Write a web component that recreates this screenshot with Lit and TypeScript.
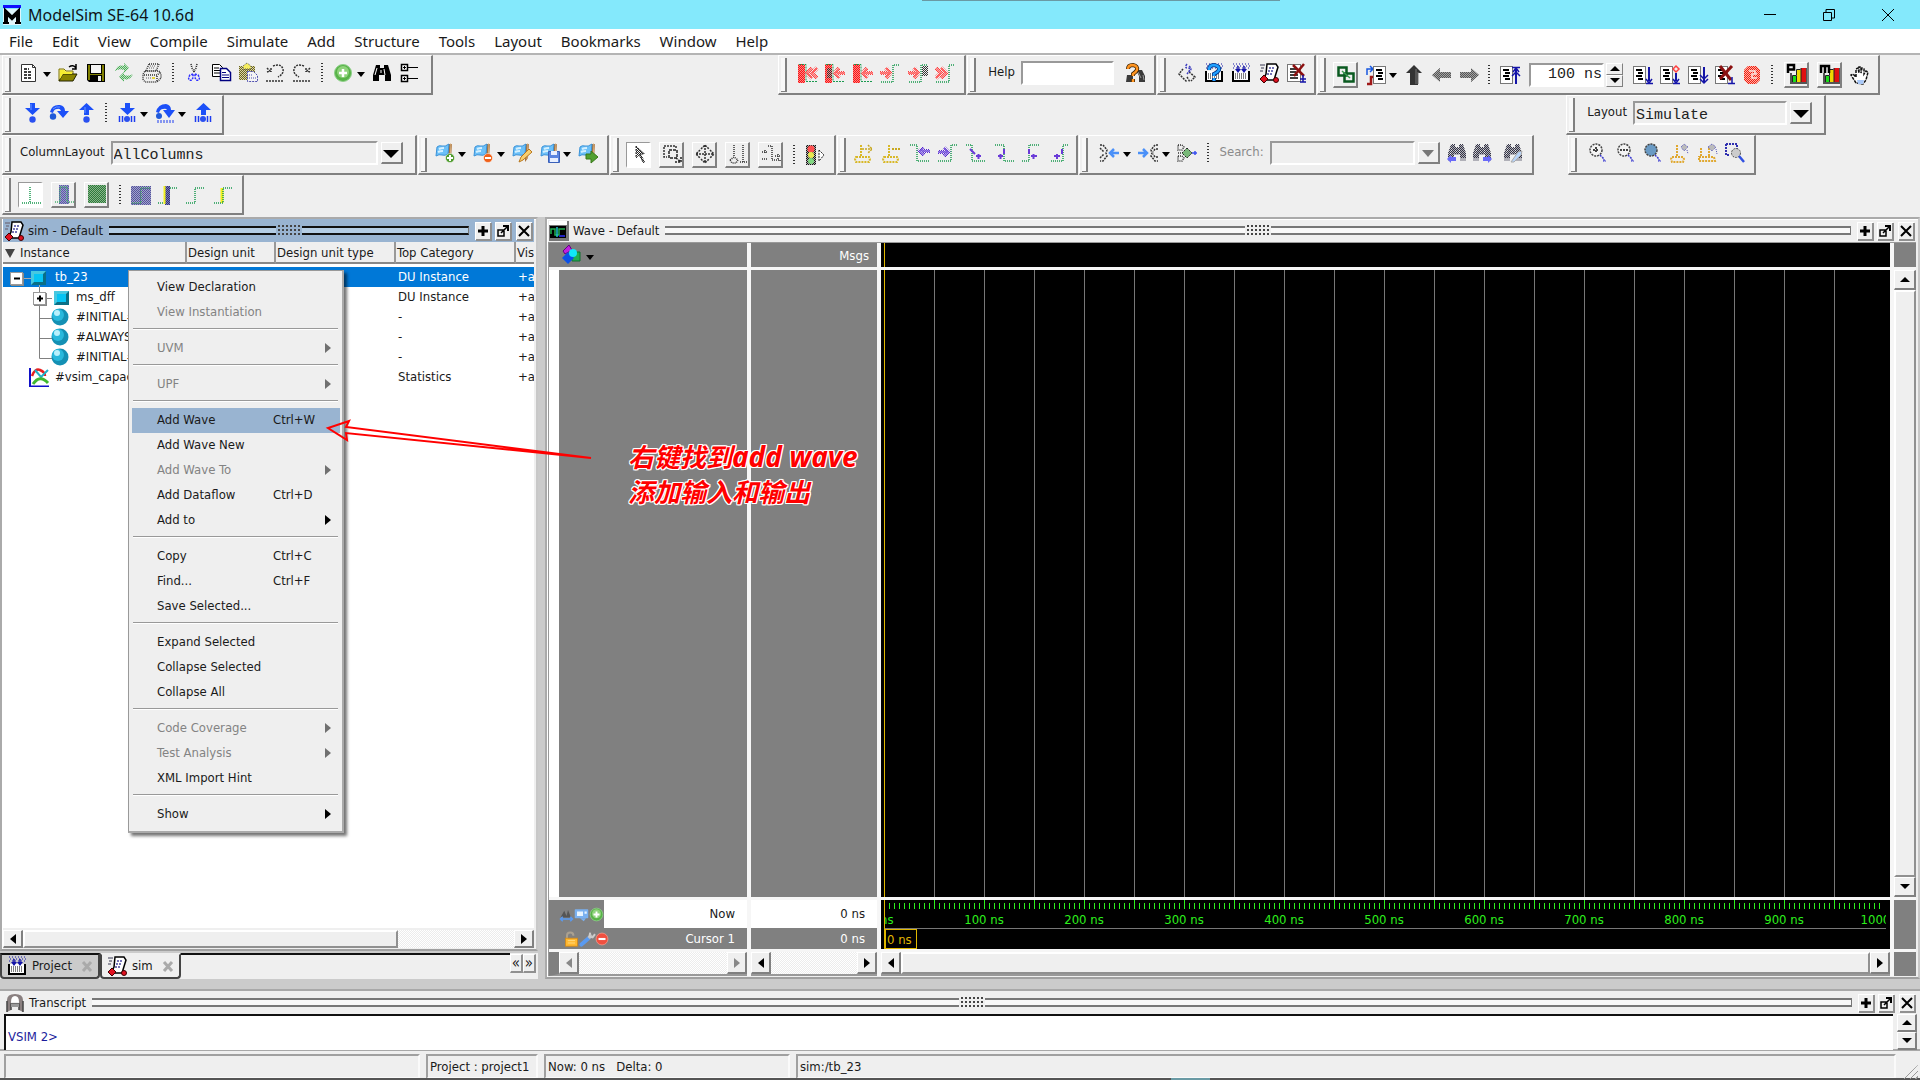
import { LitElement, html, svg, css, nothing, TemplateResult } from "lit";
import { customElement } from "lit/decorators.js";
import { classMap } from "lit/directives/class-map.js";

type Glyph = TemplateResult;

/* ---------- shared glyph parts ---------- */

const sheet = (x: number, y = 1) => svg`
  <rect x="${x}.5" y="${y}.5" width="12" height="17" fill="#fff" stroke="#777"/>
  <path d="M${x + 3} ${y + 4}h6M${x + 5} ${y + 7}h5M${x + 3} ${y + 10}h6M${x + 5} ${y + 13}h5" stroke="#000" stroke-width="2"/>`;

const flag = svg`
  <path d="M13 1h4l-1 14-3 4z" fill="#a8733c"/><path d="M15 1h1l-1 15" fill="none" stroke="#d8b080"/>
  <path d="M2 4q2-2 5-1t7-2l-1 10q-3 2-6 1t-6 1z" fill="#6cc0f8" stroke="#3a92d8"/>
  <path d="M4 6q2-1 5-1M3 9q2-1 5-1" stroke="#d4f0ff" stroke-width="2" fill="none"/>`;

const lens = (inner: Glyph | typeof nothing, fill: string) => svg`
  <circle cx="8" cy="7" r="6" fill="${fill}" stroke="#444" stroke-width="1.500" stroke-dasharray="2 1"/>
  ${inner}
  <path d="M12 12l4 4v2h2" fill="none" stroke="#3a3ad0" stroke-width="1.500" stroke-dasharray="2 1"/>`;

const binoculars = (fill: string) => svg`
  <path d="M4 2h4v3h4V2h4l3 10v6h-6v-6H7v6H1v-6z" fill="${fill}"/>
  <path d="M5 5l-2 7M12 6l1 6M9 7v3" stroke="#fff" fill="none"/>`;

const fadedBinoculars = svg`<g opacity=".45">${binoculars("#667")}</g><path d="M4 1h4v3h4V1h4l3 9v5h-6v-4H7v4H1v-5z" fill="#334" mask="url(#dither)"/>`;

const badge = (cx: number, cy: number, fill: string, plus: boolean) => svg`
  <circle cx="${cx}" cy="${cy}" r="4.500" fill="${fill}" stroke="#fff" stroke-opacity=".5"/>
  <path d="M${cx - 3} ${cy}h6${plus ? `M${cx} ${cy - 3}v6` : ""}" stroke="#fff" stroke-width="2"/>`;

const bars = svg`<path d="M2.500 13v6M5.500 13v6M14.500 13v6M17.500 13v6" stroke="#1c3cf0" stroke-width="1.500"/>`;

const basket = svg`
  <path d="M2 8v10h16V8" fill="#fff" stroke="#000" stroke-width="2"/>
  <path d="M4 11h12M4 13h12M4 15h12" stroke="#000" stroke-dasharray="1 1"/>
  <path d="M2 1h16M3 3h16M2 5h16" stroke="#1414a8" stroke-dasharray="1 2"/>`;

const cursorBase = (color: string, w: number) => svg`
  <path d="M2 14h${w}l1 2-1 3H2l-1-3zM7 2v12" fill="none" stroke="${color}" stroke-width="2" stroke-dasharray="2 1"/>`;

const wave = (d: string, color = "#1b9a50") => svg`<path d="${d}" fill="none" stroke="${color}" stroke-width="1.500" stroke-dasharray="1 1"/>`;

const redArrow = (d: string) => svg`<path d="${d}" fill="none" stroke="#ff4040" stroke-width="4" mask="url(#dither)"/><path d="${d}" fill="none" stroke="#ff6a6a" stroke-width="1.500"/>`;
const violetArrow = (d: string) => svg`<path d="${d}" fill="none" stroke="#5a2ad0" stroke-width="4" mask="url(#dither)"/><path d="${d}" fill="none" stroke="#8060e0" stroke-width="1.500"/>`;

const redBar = svg`<rect x="0" y="1" width="7" height="19" fill="#ff3030" fill-opacity=".55"/><rect x="0" y="1" width="7" height="19" fill="#ff1010" mask="url(#dither)"/><path d="M1 1.500h7V18.500h12" fill="none" stroke="#1b9a50" stroke-dasharray="2 1"/>`;

const chart = svg`<path d="M4 9v10h15V4" fill="none" stroke="#555" stroke-width="2"/>
  <rect x="6" y="12" width="4" height="6" fill="#18e018"/><rect x="10" y="6" width="4" height="12" fill="#f0d800"/><rect x="14" y="4" width="5" height="14" fill="#e01010"/>
  <path d="M5.500 18v-6.500h4V5.500h4M9.500 12v6M14 4v14" fill="none" stroke="#222"/>`;

const ICONS: Record<string, Glyph> = {
  app: svg`<rect x="1" y="0" width="18" height="3" fill="#1010ff"/><path d="M1 4h18v16H1z" fill="#dff6fb"/>
    <path d="M4 18V7l6 6 6-6v11" fill="none" stroke="#000" stroke-width="4"/><path d="M1 18h6M13 18h6" stroke="#000" stroke-width="2"/>`,
  newfile: svg`<path d="M2.500 1.500h11l3 3v14H2.500z" fill="#fff" stroke="#333"/><path d="M13.500 1.500v3h3" fill="none" stroke="#333"/>
    <path d="M5 6h5M5 9h8M5 12h7M5 15h8" stroke="#000" stroke-width="1.500" stroke-dasharray="3 1"/>`,
  open: svg`<path d="M1 18V6h5l2 2h7v3" fill="#fff29a" stroke="#7a7200"/><path d="M1 18l4-7h14l-4 7z" fill="#8a8400" stroke="#222200"/>
    <path d="M2 7h4l2 2h6v2H5l-3 5z" fill="#f6ee30"/><path d="M11 4q4-3 7 1M18 1v5h-4" fill="none" stroke="#000" stroke-width="1.500"/>`,
  save: svg`<path d="M1 1h18v18H3l-2-2z" fill="#000"/><rect x="2" y="2" width="2" height="15" fill="#808000"/><rect x="16" y="2" width="2" height="16" fill="#808000"/>
    <rect x="5" y="2" width="10" height="8" fill="#f4f4f4"/><rect x="4" y="11" width="12" height="1" fill="#808000"/><rect x="12" y="13" width="3" height="5" fill="#eee"/>`,
  refresh: svg`<g opacity=".45"><path d="M1 8q3-7 9-5V0l5 5-5 5V7q-5-2-9 1zM19 11q-3 7-9 5v3l-5-5 5-5v3q5 2 9-1z" fill="#8fd08f"/></g>
    <path d="M1 8q3-7 9-5V0l5 5-5 5V7q-5-2-9 1zM19 11q-3 7-9 5v3l-5-5 5-5v3q5 2 9-1z" fill="#4aae5a" mask="url(#dither)"/>`,
  print: svg`<path d="M7 1h10l-3 7H4zM3 8h14l2 3v4l-4 4H3l-2-3v-5zM2 12h13l4-3M15 13v5" fill="none" stroke="#333" stroke-width="1.500" stroke-dasharray="1 1"/><path d="M8 3h6M7 5h6M4 15h9" stroke="#666" stroke-dasharray="1 1"/><rect x="10" y="14" width="3" height="2" fill="#e8d840"/>`,
  cut: svg`<path d="M7 1l1 4 3 5M13 1l-1 4-3 5" fill="none" stroke="#222" stroke-width="1.500" stroke-dasharray="1 1"/>
    <path d="M9 11l-3 1q-2 3-1 5 4 1 4-4zM11 11l3 1q2 3 1 5-4 1-4-4z" fill="none" stroke="#3030ff" stroke-width="1.500" stroke-dasharray="2 1"/>`,
  copy: svg`<path d="M1.500 1.500h7l3 3v9h-10z" fill="#fff" stroke="#000"/><path d="M3 5h5M3 7.500h7M3 10h7" stroke="#000"/>
    <path d="M9.500 5.500h6l4 4v8h-10z" fill="#fff" stroke="#000080" stroke-width="1.500"/><path d="M11 9.500h4M11 12h7M11 14.500h7" stroke="#000080"/>`,
  paste: svg`<rect x="1" y="3" width="16" height="14" fill="#c8bc60" fill-opacity=".5"/><rect x="1" y="3" width="16" height="14" fill="#6a6420" mask="url(#dither)"/><path d="M5 3l4-3 4 3v3H5z" fill="#f6ee60" stroke="#555" stroke-dasharray="1 1"/>
    <path d="M9.500 8.500h6l4 4v6h-10z" fill="#f4f4f4" stroke="#5050b0" stroke-dasharray="2 1"/><path d="M11 12h4M11 15h7" stroke="#4a4ab0" stroke-dasharray="1 1"/>`,
  undo: svg`<path d="M8 3q8-3 10 3 1 5-5 8M1 18h18M2 5l4 4M2 9l3-1M6 5v4" fill="none" stroke="#333" stroke-width="1.500" stroke-dasharray="2 1"/>`,
  redo: svg`<path d="M12 3Q4 0 2 6q-1 5 5 8M1 18h18M18 5l-4 4M18 9l-3-1M14 5v4" fill="none" stroke="#333" stroke-width="1.500" stroke-dasharray="2 1"/>`,
  plus: svg`<circle cx="10" cy="10" r="8.500" fill="#58b348" stroke="#8fd08a"/><circle cx="10" cy="9" r="6" fill="#8fd37c"/><path d="M10 6v8M6 10h8" stroke="#fff" stroke-width="2.500"/>`,
  find: svg`${binoculars("#000")}`,
  tree: svg`<path d="M2.500 1.500h6v6h-6zM2.500 12.500h6v6h-6z" fill="#fff" stroke="#000" stroke-width="1.500"/><path d="M4 4.500h3M5.500 3v3M4 15.500h3M5.500 14v3M9 4.500h10M9 15.500h10" stroke="#000"/>`,
  stepin: svg`<path d="M8 0h5v5h5l-7.500 7L3 5h5z" fill="#1c50f8"/><circle cx="10.500" cy="16.500" r="3.200" fill="#2a50f0"/><path d="M9 1v6" stroke="#6a98ff"/>`,
  stepover: svg`<path d="M1 9Q3 1 11 2q5 1 5 6h4l-6 7-6-7h4q-1-3-4-2-3 0-4 4z" fill="#1c50f8"/><circle cx="4" cy="13.500" r="3.200" fill="#205ad8"/><path d="M4 6q3-3 7-2" stroke="#6a98ff" fill="none"/>`,
  stepout: svg`<path d="M8 12h5V7h5l-7.500-7L3 7h5z" fill="#1c50f8"/><circle cx="10.500" cy="16.500" r="3.200" fill="#2a50f0"/><path d="M9 4v6" stroke="#6a98ff"/>`,
  stepin2: svg`${bars}<path d="M8 0h5v5h5l-7.500 7L3 5h5z" fill="#1c50f8"/><circle cx="10" cy="16" r="3" fill="#2a50f0"/>`,
  stepover2: svg`<path d="M3 17v3M6 17v3M9 17v3M12 17v3M15 17v3M18 17v3" stroke="#1c3cf0"/><path d="M1 9Q3 1 11 1q5 1 5 6h4l-6 8-6-8h4q-1-2-4-1-3 0-4 4z" fill="#1c50f8"/><circle cx="4" cy="13" r="3" fill="#205ad8"/>`,
  stepout2: svg`${bars}<path d="M8 12h5V7h5l-7.500-7L3 7h5z" fill="#1c50f8"/><circle cx="10" cy="16" r="3" fill="#2a50f0"/>`,
  flagadd: svg`${flag}${badge(15, 15, "#4d9a2c", true)}`,
  flagdel: svg`${flag}${badge(15, 15, "#f06018", false)}`,
  flagedit: svg`${flag}<path d="M7 19l2-5 8-8 3 3-9 8z" fill="#f8cf70" stroke="#b87820"/>`,
  flagsave: svg`${flag}<path d="M8.500 8.500h11v11h-11z" fill="#5b86e0" stroke="#3a60b8"/><path d="M11 8h6v4h-6zM10 15h8v4h-8z" fill="#e8f0ff"/>`,
  flaggo: svg`${flag}<path d="M8 11h5V8l7 6-7 6v-4H8z" fill="#52a030" stroke="#387818"/>`,
  pointer: svg`<path d="M7 2v12l3-3 4 8 2-1-4-8h4z" fill="#222" mask="url(#dither)"/><path d="M7 2v12l3-3 5 8M7 2l8 8h-4l4 8" fill="none" stroke="#333" stroke-dasharray="2 1"/>`,
  zoommode: svg`<path d="M14 4V2H2v11h3" fill="none" stroke="#333" stroke-width="1.500" stroke-dasharray="2 1"/><rect x="7" y="6" width="8" height="8" fill="none" stroke="#222" stroke-width="1.500" stroke-dasharray="3 1"/><path d="M14 14l5 4M13 18h6M19 13v5" stroke="#222" stroke-width="1.500" stroke-dasharray="2 1"/>`,
  pan: svg`<path d="M10 1v18M1 10h18M6 5l4-4 4 4M6 15l4 4 4-4M5 6l-4 4 4 4M15 6l4 4-4 4" fill="none" stroke="#333" stroke-width="1.500" stroke-dasharray="2 1"/>`,
  twocur: svg`<path d="M6 1v12M15 1v17M12 18h7M2 16l4-3 4 3-2 3H4z" fill="none" stroke="#333" stroke-width="1.500" stroke-dasharray="1 1"/>`,
  edges: svg`<path d="M7 2h4v14h8v2M1 8h6M4 6v4M1 15h5M14 12h5M17 10v5" fill="none" stroke="#333" stroke-width="1.500" stroke-dasharray="1 1"/>`,
  traffic: svg`<rect x="1" y="0" width="10" height="20" fill="#888" fill-opacity=".6"/><rect x="1" y="0" width="10" height="20" fill="#111" mask="url(#dither)"/><circle cx="6" cy="4" r="3.500" fill="#ff5050"/><circle cx="6" cy="10" r="3" fill="#e8e850"/><circle cx="6" cy="16" r="3" fill="#80d880"/><path d="M14 5l5 5-5 6z" fill="#fff" stroke="#222" stroke-dasharray="2 1"/>`,
  ll: svg`${redBar}${redArrow("M14 5l-5 5 5 5M19 5l-5 5 5 5")}`,
  lb: svg`${redBar}<rect x="2" y="5" width="5" height="10" fill="#333" mask="url(#dither)"/>${redArrow("M20 10h-8M14 5l-4 5 4 5")}`,
  l1: svg`${redBar}${redArrow("M20 10h-9M14 5l-4 5 4 5")}`,
  r1: svg`${wave("M1 19h12V2h7")}${redArrow("M0 10h9M6 5l4 5-4 5")}`,
  rb: svg`${wave("M1 19h12V2h7")}<rect x="14" y="3" width="6" height="10" fill="#333" mask="url(#dither)"/>${redArrow("M0 10h9M6 5l4 5-4 5")}`,
  rr: svg`${wave("M1 19h13V2h6")}${redArrow("M1 5l5 5-5 5M6 5l5 5-5 5")}`,
  helpfind: svg`<path d="M11 7h6l3 6v6h-6v-6zM2 12h6v7H1z" fill="#3a3a3a"/><path d="M13 9l3 6M18 12l1 5" stroke="#999"/>
    <path d="M3 6q0-4 5-4 5 1 4 5-1 2-4 4v2M8 16v3" fill="none" stroke="#3a2000" stroke-width="4"/><path d="M3 6q0-4 5-4 5 1 4 5-1 2-4 4v2M8 16v3" fill="none" stroke="#ff9420" stroke-width="2.500"/>`,
  compile1: svg`<path d="M6 6l-4 5 8 8M12 9l6 5-4 4M10 14l3 5" fill="none" stroke="#333" stroke-width="1.500" stroke-dasharray="2 1"/><path d="M10 1q-3 4 1 4t-1 6M12 3q4 3 0 6" fill="none" stroke="#4040c0" stroke-width="1.500" stroke-dasharray="2 1"/>`,
  compileq: svg`${basket}<path d="M5 7q0-5 5-5 6 1 5 5-1 2-5 4v2M10 15v3" fill="none" stroke="#003080" stroke-width="4"/><path d="M5 7q0-5 5-5 6 1 5 5-1 2-5 4v2M10 15v3" fill="none" stroke="#20a0ff" stroke-width="2.500"/>`,
  project: svg`${basket}<path d="M7 3v5M13 3v5" stroke="#1414a8" stroke-width="1.500"/><path d="M4 6h6l-3 4zM10 6h6l-3 4z" fill="#1414a8"/>`,
  sim: svg`<path d="M1 2h5M2 5h3M1 8h3" stroke="#778" stroke-width="1.500"/><path d="M8 1h9l2 3-4 13H4l3-6z" fill="#fff" stroke="#000" stroke-width="1.500"/>
    <path d="M10 5h6M9 8h6M8 11h6" stroke="#4848a0" stroke-width="1.500" stroke-dasharray="2 1"/><path d="M5 12l4 4-4 4-4-4z" fill="#e01020" stroke="#400000"/><circle cx="17" cy="17" r="2.500" fill="#e01020" stroke="#400000"/>`,
  endsim: svg`<rect x="1.500" y="1.500" width="13" height="17" fill="#fff" stroke="#777"/><path d="M4 6h7M4 9h6M4 12h8M4 15h8" stroke="#000" stroke-width="1.500"/><path d="M7 2l11 11M18 1L8 13" stroke="#8b1010" stroke-width="2.500"/><path d="M17 12v7M14 16h6M14 19h6" stroke="#1414a8" stroke-width="1.500"/>`,
  link: svg`<path d="M2.500 3.500h8v8h-8zM8.500 9.500h9v8h-9z" fill="none" stroke="#0a5a20" stroke-width="2.500"/><path d="M6 7l8 7" stroke="#3a9a50" stroke-width="1.500"/>`,
  restartenv: svg`<path d="M1 10V4h5M4 1l3 3-3 3" fill="none" stroke="#1858e0" stroke-width="1.500"/><path d="M1 19h4v-7h3" fill="none" stroke="#a01818" stroke-width="2.500"/>${sheet(7)}`,
  up: svg`<path d="M10 0l8 8h-4v12H6V8H2z" fill="#333"/><path d="M12 4v15M14 7v12" stroke="#777"/>`,
  left: svg`<path d="M0 10l8-7v4h11v6H8v4z" fill="#a4a4a4"/><path d="M0 10l8-7v4h11v6H8v4z" fill="#555" mask="url(#dither)"/>`,
  right: svg`<path d="M20 10l-8-7v4H1v6h11v4z" fill="#a4a4a4"/><path d="M20 10l-8-7v4H1v6h11v4z" fill="#555" mask="url(#dither)"/>`,
  restart: svg`${sheet(0)}<path d="M16 3v16" stroke="#1414a8" stroke-width="2"/><path d="M12 2.500h8M13 7l3-4 3 4M12 11l4-4 4 4" fill="none" stroke="#1414a8" stroke-width="1.500"/>`,
  run: svg`${sheet(0)}<path d="M16 2v14" stroke="#1414a8" stroke-width="2"/><path d="M13 14l3 4 3-4M13 18.500h7" fill="none" stroke="#1414a8" stroke-width="1.500"/>`,
  runc: svg`${sheet(0)}<path d="M16 8v8" stroke="#1414a8" stroke-width="2"/><path d="M13 14l3 4 3-4M13 18.500h7" fill="none" stroke="#1414a8" stroke-width="1.500"/><path d="M16 1l3 3-3 3-3-3z" fill="none" stroke="#ff4040" stroke-width="1.500"/>`,
  runall: svg`${sheet(0)}<path d="M16 2v16" stroke="#1414a8" stroke-width="2"/><path d="M12 10l4 4 4-4M12 14l4 4 4-4" fill="none" stroke="#1414a8" stroke-width="1.500"/>`,
  break: svg`${sheet(0)}<path d="M5 1l11 14M17 1L5 14" stroke="#8b1010" stroke-width="3"/><path d="M17 12v6M13 18.500h7" stroke="#1414a8" stroke-width="1.500"/>`,
  stop: svg`<path d="M6 1h8l4 4v10l-4 4H6l-4-4V5z" fill="#ffb0a8"/><path d="M6 1h8l4 4v10l-4 4H6l-4-4V5z" fill="#f02010" mask="url(#dither)"/><path d="M7 6h6v3M15 9h-5v4h5" fill="none" stroke="#fbe4e0" stroke-width="1.500"/>`,
  perf: svg`${chart}<path d="M1 9V1h6v4.500H2" fill="none" stroke="#000" stroke-width="2.500"/>`,
  mem: svg`${chart}<path d="M1 9V2h8v7M5 2v7" fill="none" stroke="#000" stroke-width="2.500"/>`,
  hand: svg`<path d="M6 18l-5-8 2-1 3 3V4l2-1 1 5V2h2v6l1-5 2 1v5l2-3 2 1-2 8-3 4z" fill="#fff" stroke="#111" stroke-width="1.500" stroke-dasharray="3 1"/><path d="M7 15h7l-1 4H8z" fill="#a8c8f8"/>`,
  curadd: svg`${cursorBase("#d8b828", 13)}<path d="M8 6h10M14 2l4 4-4 4" stroke="#c8a820" stroke-width="1.500" fill="none" stroke-dasharray="2 1"/>`,
  curdel: svg`${cursorBase("#d8b828", 13)}<path d="M10 6h9" stroke="#c8a820" stroke-width="2" stroke-dasharray="2 1"/>`,
  t1: svg`${wave("M0 2h7v16h13")}${violetArrow("M20 8h-8M14 5l-4 3 4 4")}`,
  t2: svg`${wave("M0 18h13V2h7")}${violetArrow("M0 9h9M6 5l4 4-4 4")}`,
  t3: svg`${wave("M0 2h6v16h13")}<path d="M4 6l5 5M10 13h5M12.500 11v5" stroke="#6a3ad8" stroke-width="2"/>`,
  t4: svg`${wave("M1 2h9v16h10")}<path d="M10 6v5M4 13h5M6.500 11v5" stroke="#6a3ad8" stroke-width="2"/>`,
  t5: svg`${wave("M0 18h7V2h11")}<path d="M7 6v5M9 13h6M11.500 11v5" stroke="#6a3ad8" stroke-width="2"/>`,
  t6: svg`${wave("M1 18h12V2h6")}<path d="M12 6v5M4 13h6M7 11v5" stroke="#6a3ad8" stroke-width="2"/>`,
  fanin: svg`<path d="M1 2h3l4 5-1 3 1 3-4 5H1M1 5l4 4M1 15l4-4" fill="none" stroke="#333" stroke-width="1.500" stroke-dasharray="2 1"/><path d="M20 10h-7M15 6l-4 4 4 4" fill="none" stroke="#4a90f8" stroke-width="2.500"/>`,
  fanout: svg`<path d="M20 2h-3l-4 5 1 3-1 3 4 5h3M20 6h-3l-2 3M20 14h-3l-2-3" fill="none" stroke="#333" stroke-width="1.500" stroke-dasharray="2 1"/><path d="M0 10h8M5 6l4 4-4 4" fill="none" stroke="#4a90f8" stroke-width="2.500"/>`,
  netexp: svg`<path d="M1 2h4l2 2-2 3H1zM1 13h4l2 2-2 3H1zM1 10h6" fill="none" stroke="#333" stroke-width="1.500" stroke-dasharray="1 1"/><path d="M10 5l5 5-5 5-5-5z" fill="#78b878" stroke="#222" stroke-dasharray="2 1"/><path d="M15 10h5M18 8v4" stroke="#3a50f0" stroke-width="1.500"/>`,
  findprev: svg`${fadedBinoculars}<path d="M0 16l4-4v2h5v4H4v2z" fill="#6a6af8"/>`,
  findnext: svg`${fadedBinoculars}<path d="M20 16l-4-4v2h-5v4h5v2z" fill="#6a6af8"/>`,
  findopt: svg`${fadedBinoculars}<path d="M8 19l7-10 4-1-1 4-7 7z" fill="#b8d4f8" stroke="#aaa"/>`,
  zin: svg`${lens(svg`<path d="M5 7h6M8 4v6" stroke="#444" stroke-width="2" stroke-dasharray="2 1"/>`, "#f4f4f4")}`,
  zout: svg`${lens(svg`<path d="M4 7h8" stroke="#444" stroke-width="2" stroke-dasharray="2 1"/>`, "#f4f4f4")}`,
  zfull: svg`${lens(nothing, "#6a9ac4")}`,
  zcur: svg`${cursorBase("#e0a830", 11)}<path d="M11 4l3-3 4 3-4 4zM17 7l1 4" fill="#bbb" stroke="#5555bb" stroke-dasharray="1 1"/>`,
  zcur2: svg`<path d="M3 5v9M11 5v9M1 14h15l1 4H1z" fill="none" stroke="#e0a830" stroke-width="2" stroke-dasharray="2 1"/><path d="M10 4l4-3 4 3-4 4zM18 6l1 5" fill="#bbb" stroke="#5555bb" stroke-dasharray="1 1"/>`,
  zarea: svg`<path d="M1 1h11v5M1 1v11h4" fill="none" stroke="#3030b0" stroke-width="2" stroke-dasharray="2 1"/><circle cx="11" cy="10" r="4.500" fill="#ccc" stroke="#555" stroke-dasharray="2 1"/><path d="M14 13l5 6" stroke="#3050e0" stroke-width="2.500"/>`,
  w1: svg`${wave("M1 19h19M9 3v15")}`,
  w2: svg`<rect x="5" y="1" width="10" height="19" fill="#9a9ac8"/><rect x="5" y="1" width="10" height="19" fill="#5a5aa8" mask="url(#dither)"/>${wave("M1 18h5V3h7v15h7", "#4ab070")}`,
  w3: svg`<rect x="1" y="1" width="18" height="18" fill="#88b488"/><rect x="1" y="1" width="18" height="18" fill="#2c7a3c" mask="url(#dither)"/>`,
  w4: svg`<rect x="0" y="1" width="20" height="19" fill="#a2a2cc"/><rect x="0" y="1" width="20" height="19" fill="#54549c" mask="url(#dither)"/>${wave("M1 18h9V3h9", "#3a9a60")}`,
  w5: svg`<rect x="7" y="1" width="5" height="19" fill="#7a7ab8"/><rect x="7" y="1" width="5" height="19" fill="#33337c" mask="url(#dither)"/><path d="M6.500 1v18" stroke="#f0f020" stroke-width="2"/>${wave("M0 18h6M12 3h7")}`,
  w6: svg`${wave("M1 18h9V3h9")}`,
  w7: svg`<path d="M9 3v15" stroke="#f0f020" stroke-width="3"/>${wave("M1 18h9V3h9")}`,
  wavewin: svg`<path d="M0 0h20v20H0z" fill="#777"/><path d="M0 0h18v4H0z" fill="#fff"/><path d="M1 5h16v12H1z" fill="#000"/><path d="M2 13V8h4v6h4V8h6" fill="none" stroke="#1fb050" stroke-width="1.500"/><path d="M8 6v10" stroke="#20c0d0" stroke-width="1.500"/><path d="M10 15h6" stroke="#2020c0" stroke-width="2"/>`,
  transcript: svg`<path d="M2 19V7q0-6 8-6t8 6v12l-4-2V9H6v8z" fill="#8a8080"/><path d="M6 9q0-6 4-6t4 6z" fill="#fff"/><path d="M2 19V8M18 19V8M6 17v-6h8v6" fill="none" stroke="#444" stroke-width="1.500"/><path d="M6 11h8v3H6z" fill="#999"/>`,
  shapes: svg`<path d="M2 6l6-6 3 5-7 4z" fill="#c020e0" stroke="#600080"/><path d="M11 7h8v9h-8z" fill="#20b050" stroke="#107030"/><path d="M7 7l6 6-6 6-6-6z" fill="#0a50e8"/><circle cx="12" cy="8" r="4" fill="#10e8f8"/>`,
  freq: svg`<path d="M2 14l5-9 3 7 2-8 4 10z" fill="#555"/><path d="M3 16h14M5 13l-3 3 3 3M15 13l3 3-3 3" stroke="#5a9af0" stroke-width="2" fill="none"/>`,
  note: svg`<rect x="1" y="3" width="18" height="12" rx="1" fill="#7ab0f0"/><path d="M4 6h8v6H4zM14 6h3v3h-3z" fill="#e8f4ff"/><path d="M8 15h8l-3 4z" fill="#7ab0f0"/>`,
  lock: svg`<path d="M5 10V6q0-4 4-4t4 4" fill="none" stroke="#aaa090" stroke-width="2.500"/><rect x="3" y="9" width="15" height="10" fill="#ffb830" stroke="#d08818"/><path d="M6 12h9M6 15h9" stroke="#ffe090"/>`,
  wrench: svg`<path d="M3 17L12 9" stroke="#5a9af0" stroke-width="5" stroke-linecap="round"/><path d="M12 9l4-4" stroke="#bbb" stroke-width="4"/><path d="M14 2l-1 5 4 1 3-4" fill="none" stroke="#ccc" stroke-width="2.500"/>`,
  minus: svg`<circle cx="10" cy="10" r="8.500" fill="#f05040" stroke="#f8a090"/><path d="M5 10h10" stroke="#fff" stroke-width="3"/>`,
  add: svg`<path d="M7 2v10M2 7h10" stroke="#000" stroke-width="3"/>`,
  undock: svg`<path d="M2 6h6v6H2zM5 9l6-6" fill="none" stroke="#000" stroke-width="1.500"/><path d="M7 1h6v6h-2V3H7z" fill="#000"/>`,
  close: svg`<path d="M2 2l10 10M12 2L2 12" stroke="#000" stroke-width="2"/>`,
  dismiss: svg`<path d="M2 2l8 9M10 2l-8 9" stroke="#aaa" stroke-width="3"/>`,
};

const icon = (name: string, size = 20, box = 20) =>
  html`<svg class="ico" width=${size} height=${size} viewBox="0 0 ${box} ${box}" aria-hidden="true">${ICONS[name]}</svg>`;

/* ---------- data ---------- */

const MENUS = ["File", "Edit", "View", "Compile", "Simulate", "Add", "Structure", "Tools", "Layout", "Bookmarks", "Window", "Help"];

type Item = { label: string; key?: string; sub?: boolean; off?: boolean; hot?: boolean } | null;
const CONTEXT: Item[] = [
  { label: "View Declaration" }, { label: "View Instantiation", off: true }, null,
  { label: "UVM", off: true, sub: true }, null,
  { label: "UPF", off: true, sub: true }, null,
  { label: "Add Wave", key: "Ctrl+W", hot: true }, { label: "Add Wave New" }, { label: "Add Wave To", off: true, sub: true },
  { label: "Add Dataflow", key: "Ctrl+D" }, { label: "Add to", sub: true }, null,
  { label: "Copy", key: "Ctrl+C" }, { label: "Find...", key: "Ctrl+F" }, { label: "Save Selected..." }, null,
  { label: "Expand Selected" }, { label: "Collapse Selected" }, { label: "Collapse All" }, null,
  { label: "Code Coverage", off: true, sub: true }, { label: "Test Analysis", off: true, sub: true }, { label: "XML Import Hint" }, null,
  { label: "Show", sub: true },
];

const cube = (x: number) => svg`<rect x="${x}" y="4" width="15" height="14" fill="#0a6f86"/><path d="M${x} 4h15l-3 3H${x + 3}v8l-3 3z" fill="#48c8e0"/><rect x="${x + 3}" y="7" width="9" height="8" fill="#06c4f4"/>`;
const expander = (x: number, plus: boolean) => svg`<rect x="${x + 1}" y="6" width="13" height="13" fill="#888"/><rect x="${x}.5" y="5.5" width="12" height="12" fill="#fff" stroke="#999"/><path d="M${x + 4} 11.500h6${plus ? `M${x + 7} 8.500v6` : ""}" stroke="#000" stroke-width="2"/>`;
const ball = svg`<circle cx="57" cy="10" r="8.500" fill="#1490b4"/><circle cx="55" cy="8" r="6" fill="#28b8dc"/><circle cx="54" cy="6" r="3" fill="#b8f0fc"/>`;
const stats = svg`<path d="M27 1v19M26 19.500h20" stroke="#1010c8" stroke-width="2"/><path d="M29 9q3-8 8-6t5 6" fill="none" stroke="#e82020" stroke-width="2.500"/><path d="M32 3l6 7 7-7" fill="none" stroke="#20b0c8" stroke-width="2"/><path d="M30 17q7-10 15-1" fill="none" stroke="#40b830" stroke-width="3"/>`;

const ROWS: { name: string; deep?: boolean; art: Glyph; cat: string; selected?: boolean }[] = [
  { name: "tb_23", cat: "DU Instance", selected: true, art: svg`<path d="M21 11.500h7M36.500 17v3" stroke="#aaa"/>${expander(7, false)}${cube(28)}` },
  { name: "ms_dff", deep: true, cat: "DU Instance", art: svg`<path d="M36.500 0v20M43 11.500h6" stroke="#808080"/>${expander(30, true)}${cube(51)}` },
  { name: "#INITIAL#14", deep: true, cat: "-", art: svg`<path d="M36.500 0v20M36 11.500h14" stroke="#808080"/>${ball}` },
  { name: "#ALWAYS#20", deep: true, cat: "-", art: svg`<path d="M36.500 0v20M36 11.500h14" stroke="#808080"/>${ball}` },
  { name: "#INITIAL#25", deep: true, cat: "-", art: svg`<path d="M36.500 0v11.500h14" fill="none" stroke="#808080"/>${ball}` },
  { name: "#vsim_capacity#", cat: "Statistics", art: stats },
];

const RULER = ["100 ns", "200 ns", "300 ns", "400 ns", "500 ns", "600 ns", "700 ns", "800 ns", "900 ns", "1000 ns"];

/* ---------- small builders ---------- */

const b = (name: string, label: string, cls = "s28") =>
  html`<button class="tool ${cls}" aria-label=${label}>${icon(name)}</button>`;
const caret = (label = "More") => html`<button class="caret" aria-label=${label}></button>`;
const sep = html`<span class="dotsep"></span>`;
const arrow = (dir: string, off = false) =>
  html`<button class=${classMap({ sbtn: true, off })} aria-label="Scroll ${dir}"><i class="tri ${dir}"></i></button>`;
const paneHead = (name: string, title: string, active = false) => html`
  <header class=${classMap({ head: true, active })}>
    ${icon(name)}<h2>${title}</h2>
    <span class="rule"></span><span class="dots"></span><span class="rule end"></span>
    <button aria-label="Zoom pane">${icon("add", 14, 14)}</button>
    <button aria-label="Undock pane">${icon("undock", 14, 14)}</button>
    <button aria-label="Close pane">${icon("close", 14, 14)}</button>
  </header>`;

@customElement("app-root")
export class AppRoot extends LitElement {
  static styles = css`
    :host {
      display: flex; flex-direction: column; position: relative; height: 100vh; overflow: hidden;
      background: #efefef; color: #1a1a1a;
      font: 13px/20px "DejaVu Sans Condensed", "Noto Sans", "Noto Sans CJK SC", sans-serif;
    }
    * { box-sizing: border-box; }
    button, input, select { font: inherit; color: inherit; border: 0; padding: 0; margin: 0; background: none; border-radius: 0; }
    h1, h2, ul, p { margin: 0; padding: 0; font: inherit; list-style: none; }
    svg { display: block; flex: none; }
    .defs { position: absolute; width: 0; height: 0; }

    .title { display: flex; align-items: center; height: 29px; flex: none; background: #84e9fc; padding: 0 3px 0 2px; color: #101418; }
    .title h1 { font: 16px/24px "Noto Sans", "Open Sans", sans-serif; padding-left: 6px; flex: 1; }
    .title button { width: 59px; height: 29px; display: grid; place-items: center; }
    .edge { position: absolute; top: 0; left: 48%; width: 358px; height: 1px; background: #6a9aa4; }
    .menus { display: flex; height: 26px; flex: none; background: #fff; border-bottom: 2px solid #b4b4b4; font: 15px/24px "Noto Sans", "Open Sans", sans-serif; }
    .menus button { padding: 0 10px 0 9px; }

    .bars { flex: none; padding: 0 0 2px 2px; }
    .bar { display: flex; height: 40px; }
    .bar.r1 { padding-right: 40px; }
    .bar.r2 { padding-right: 94px; }
    .bar.r3 { padding-right: 164px; }
    .tb {
      position: relative; display: flex; align-items: center; flex: none; height: 40px; padding: 0 5px 3px 12px; margin-right: 1px;
      border: solid; border-width: 1px 2px 2px 1px; border-color: #fff #808080 #808080 #fff;
    }
    .tb::before { content: ""; position: absolute; left: 2px; top: 2px; bottom: 1px; width: 4px; border: solid #808080; border-width: 0 2px 1px 0; background: #f8f8f8; }
    .push { margin-left: auto; }
    .tb.wide { padding-left: 15px; }
    .tb.roomy { padding-right: 8px; }
    .tb.snug { padding-right: 2px; }
    .tb.low { padding-bottom: 0; }
    .tb.last { margin-right: 0; }
    .tool { display: flex; align-items: center; flex: none; height: 26px; padding-left: 4px; }
    .s28 { width: 28px; }
    .s27 { width: 27px; }
    .s25 { width: 25px; }
    .s31 { width: 31px; }
    .s33 { width: 25px; margin-right: 8px; padding-left: 2px; border: 1px solid; border-color: #fff #808080 #808080 #fff; border-width: 1px 2px 2px 1px; }
    .s33.tight { margin-right: 4px; }
    .s33.gap { margin-left: 5px; }
    .s33.on { background: #fff; border-color: #999 #fff #fff #999; }
    .caret { width: 11px; height: 26px; flex: none; }
    .caret::before { content: ""; display: block; margin: 2px 0 0; border: 4px solid transparent; border-top: 5px solid #000; border-bottom: 0; width: 0; }
    .dotsep { width: 2px; height: 20px; margin: 0 6px; flex: none; background: repeating-linear-gradient(#333 0 1px, transparent 1px 3px); }
    .tb label { padding: 0 6px 2px 5px; }
    .tb label.off { color: #8a8a8a; }
    .field { height: 24px; border: 2px solid; border-color: #999 #fff #fff #999; font: 15px/20px "Liberation Mono", monospace; background: #efefef; appearance: none; padding: 3px 0 0 1px; color: #222; }
    .field.white { background: #fff; }
    .f1 { width: 267px; } .f2 { width: 154px; } .f3 { width: 145px; } .f4 { width: 93px; margin-right: 7px; }
    .f5 { width: 75px; margin-left: 5px; text-align: right; padding-top: 0; }
    .drop { width: 22px; height: 22px; margin: 0 7px 0 3px; border: 1px solid; border-width: 1px 2px 2px 1px; border-color: #fff #808080 #808080 #fff; display: grid; place-items: center; }
    .drop::before { content: ""; border: 8px solid transparent; border-top: 8px solid #000; border-bottom: 0; margin-top: 2px; }
    .drop.off { margin-right: 3px; }
    .drop.off::before { border-top-color: #777; border-width: 7px 6px 0; }
    .spin { display: grid; width: 17px; height: 24px; margin: 0 6px 0 2px; }
    .spin button { display: grid; place-items: center; border: 1px solid; border-color: #fff #808080 #808080 #fff; }

    .tri { display: block; width: 0; height: 0; border: 5px solid transparent; }
    .tri.left { border-right: 6px solid #000; border-left: 0; }
    .tri.right { border-left: 6px solid #000; border-right: 0; }
    .tri.up { border-bottom: 5px solid #000; border-top: 0; }
    .tri.down { border-top: 5px solid #000; border-bottom: 0; }
    .off .tri.left { border-right-color: #888; } .off .tri.right { border-left-color: #888; }
    .sbtn { display: grid; place-items: center; flex: none; width: 20px; min-height: 17px; background: #efefef; border: solid; border-width: 1px 2px 2px 1px; border-color: #fff #808080 #808080 #fff; }
    .track { flex: 1; display: flex; background: repeating-conic-gradient(#fff 0 25%, #ececec 0 50%) 0 0 / 2px 2px; }
    .track .thumb { flex: 373; }
    .rest { flex: 117; }
    .thumb { background: #efefef; border: solid; border-width: 2px; border-color: #fff #909090 #909090 #fff; flex: 1; }

    .work { flex: 1; min-height: 0; display: grid; grid-template-columns: 538px minmax(0, 1fr); gap: 7px; background: #cbcbcb; padding-bottom: 10px; }
    .left { display: flex; flex-direction: column; min-height: 0; }
    .pane { display: flex; flex-direction: column; min-height: 0; min-width: 0; flex: 1; background: #efefef; border: 2px solid; border-color: #aaa #c8c8c8 #a0a0a0 #aaa; box-shadow: inset 1px 1px #fff; padding: 0 2px 1px 1px; }
    .head { display: flex; align-items: center; flex: none; height: 23px; padding: 2px 0 2px 1px; }
    .head.active { background: #99b4d1; }
    .head h2 { padding: 0 6px 0 4px; white-space: nowrap; }
    .head button { width: 14px; height: 16px; display: grid; place-items: center; margin-left: 6px; box-shadow: 1px 1px 0 1px #909090, 0 0 0 1px #fff; background: #efefef; }
    .head button:last-child { margin: 0 3px 0 7px; }
    .rule { flex: 1; height: 9px; border: solid #777; border-width: 2px 0; background: #f8f8f8; }
    .active .rule { border-color: #111; background: #b4cde4; }
    .rule.end { margin-right: 1px; border-right: 1px solid #777; }
    .dots { width: 22px; height: 11px; margin: 0 2px; background: radial-gradient(circle at 1px 1px, #444 0 1px, transparent 1px) 0 0 / 4px 4px; }
    .ico { overflow: visible; }

    .tree { flex: 1; min-height: 0; overflow: hidden; background: #fff; }
    table { width: 100%; table-layout: fixed; border-collapse: separate; border-spacing: 0; }
    .c1 { width: 184px; } .c2 { width: 89px; } .c3 { width: 120px; } .c4 { width: 120px; }
    th { height: 22px; padding: 2px 0 0 1px; line-height: 18px; text-align: left; font-weight: 400; white-space: nowrap; overflow: hidden; background: #efefef; border-right: 2px solid #999; border-bottom: 2px solid #888; }
    th:last-child { border-right: 0; }
    th .sort { display: inline-block; vertical-align: -1px; border: 5px solid transparent; border-top: 9px solid #444; border-bottom: 0; margin: 0 5px 0 1px; }
    .spacer td { height: 3px; }
    td { height: 20px; padding: 0 0 0 2px; white-space: nowrap; overflow: hidden; line-height: 20px; }
    td:first-child { padding: 0; }
    .node { display: flex; height: 20px; gap: 1px; }
    .sel td { background: #0078d7; color: #fff; }
    .hbar { display: flex; height: 18px; flex: none; margin-top: 2px; }
    .tabs { display: flex; align-items: flex-start; height: 28px; flex: none; background: #efefef; border-top: 2px solid #cbcbcb; padding-right: 2px; }
    .tab { display: flex; align-items: center; height: 26px; gap: 5px; padding: 0 5px; border: 2px solid #444; border-top-color: #111; border-radius: 0 0 4px 4px; background: #cbcbcb; }
    .tab.cur { background: #efefef; border-top-color: #efefef; }
    .tab .ico:last-child { margin-left: 4px; }
    .fill { flex: 1; border-top: 2px solid #111; }
    .nav { display: flex; padding-top: 1px; }
    .nav button { width: 13px; height: 19px; font-size: 15px; line-height: 12px; border: solid; border-width: 1px 2px 2px 1px; border-color: #fff #909090 #909090 #fff; }

    .wave { flex: 1; min-height: 0; display: grid; gap: 3px 4px; background: #f6f6f6; border: solid #999; border-width: 1px 0 0 1px;
      grid-template: 24px minmax(0, 1fr) 49px 24px / 198px 126px minmax(0, 1fr) 22px; }
    .g { background: #808080; min-width: 0; }
    .edgew { border-left: 10px solid #fff; }
    .sh { display: flex; align-items: center; padding-left: 12px; }
    .sh .caret { margin: 3px 0 0 5px; }
    .msgs { color: #fff; text-align: right; padding: 3px 8px 0 0; }
    .black { background: #000; position: relative; min-width: 0; overflow: hidden; }
    .black::before { content: ""; position: absolute; left: 3px; top: 0; bottom: 0; width: 1px; background: #e0b800; }
    .grid { background: linear-gradient(270deg, #000 8px, transparent 8px), repeating-linear-gradient(90deg, transparent 0 49px, #777 49px 50px) 4px 0 / auto #000; }
    .ticks { height: 9px; margin: 0 6px 0 3px; background:
      linear-gradient(90deg, #2cf01c 1px, transparent 1px) 0 0 / 50px 9px,
      linear-gradient(90deg, #2cf01c 1px, transparent 1px) 0 3px / 5px 6px; background-repeat: repeat-x; }
    .marks { display: flex; height: 20px; border-bottom: 1px solid #777; color: #2cf01c; overflow: hidden; margin: 0 4px 0 3px; }
    .marks span { flex: none; width: 100px; text-align: center; line-height: 22px; }
    .marks span:first-child { width: 50px; text-align: left; text-indent: -4px; }
    .stamp { margin-left: 4px; width: 32px; height: 20px; border: 1px solid #e0b800; color: #e0b800; padding-left: 1px; line-height: 20px; white-space: nowrap; }
    .nowrow { display: flex; align-items: center; height: 28px; background: #fff; }
    .currow { display: flex; align-items: center; height: 21px; color: #fff; }
    .tray { display: flex; align-items: center; align-self: stretch; background: #808080; width: 55px; padding-left: 10px; }
    .tray.low { padding-left: 14px; width: 62px; }
    .val { flex: 1; text-align: right; padding-right: 12px; }
    .sbar { display: flex; min-width: 0; border-bottom: 2px solid #999; }
    .sbar.edgeg { border-left: 10px solid #808080; }
    .vbar { display: flex; flex-direction: column; align-items: stretch; }
    .vbar .sbtn { width: auto; height: 20px; }

    .log { flex: none; height: 62px; background: #efefef; border: solid #a8a8a8; border-width: 2px 0; padding: 0 3px 0 4px; }
    .logbody { display: grid; grid-template-columns: minmax(0, 1fr) 20px; gap: 4px; height: 36px; }
    .text { background: #fff; border: solid #111; border-width: 2px 0 0 2px; color: #1c1c9c; padding: 11px 0 0 2px; }
    .logbody .vbar .sbtn { height: 18px; }
    .status { display: grid; flex: none; grid-template-columns: 416px 112px 246px minmax(0, 1fr) 16px; gap: 6px; height: 27px; padding: 3px 2px 0 4px; }
    .status span { border: 2px solid; border-color: #a0a0a0 #fafafa #fafafa #a0a0a0; padding-left: 2px; line-height: 21px; white-space: pre; }
    .status i { align-self: end; height: 14px; background: repeating-linear-gradient(135deg, transparent 0 3px, #999 3px 4px); clip-path: polygon(100% 0, 100% 100%, 0 100%); }
    .foot { flex: none; height: 2px; background: linear-gradient(90deg, transparent 61%, #6a9aa4 61% 63%, transparent 63%), #555; }

    .ctx { position: absolute; left: 128px; top: 270px; width: 216px; padding: 4px 3px; background: #efefef; border: 1px solid #999; border-right: 2px solid #aaa; border-bottom: 2px solid #aaa; box-shadow: 3px 3px 3px rgba(0, 0, 0, 0.55); }
    .ctx hr { height: 2px; border: 0; margin: 3px 1px 6px; background: #999; border-bottom: 1px solid #fff; }
    .ctx button { display: grid; grid-template-columns: 116px 1fr 12px; align-items: center; width: 208px; height: 25px; padding: 0 3px 1px 25px; text-align: left; white-space: nowrap; }
    .ctx .hot { background: #99b4d1; }
    .ctx .off { color: #838383; }
    .ctx .off .tri.right { border-left-color: #707070; }
    .pointer { position: absolute; left: 321px; top: 415px; }
    .note { position: absolute; left: 628px; top: 439px; color: #f00; font: italic bold 26px/35px "Noto Sans", "Noto Sans CJK SC", sans-serif;
      text-shadow: 1px 0 #fff, -1px 0 #fff, 0 1px #fff, 0 -1px #fff, 1px 1px #fff, -1px -1px #fff, 1px -1px #fff, -1px 1px #fff; }
    .note span { font-size: 28px; }
  `;

  private toolbars() {
    return html`<div class="bars">
      <div class="bar r1">
        <div class="tb roomy">
          ${b("newfile", "New")}${caret()}${b("open", "Open")}${b("save", "Save")}${b("refresh", "Reload")}${b("print", "Print")}${sep}
          ${b("cut", "Cut", "s27")}${b("copy", "Copy", "s27")}${b("paste", "Paste", "s27")}${b("undo", "Undo", "s27")}${b("redo", "Redo", "s27")}${sep}
          ${b("plus", "Add")}${caret()}${b("find", "Find", "s27")}${b("tree", "Collapse all")}
        </div>
        <div class="tb push wide">
          ${b("ll", "First difference", "s27")}${b("lb", "Previous annotated", "s28")}${b("l1", "Previous difference", "s27")}${b("r1", "Next difference", "s28")}${b("rb", "Next annotated", "s27")}${b("rr", "Last difference", "s28")}
        </div>
        <div class="tb wide">
          <label for="help">Help</label><input id="help" class="field white f4" />
          ${b("helpfind", "Search help", "s28")}
        </div>
        <div class="tb wide">
          ${b("compile1", "Compile", "s27")}${b("compileq", "Compile out of date", "s27")}${b("project", "Compile all")}${b("sim", "Simulate", "s27")}${b("endsim", "End simulation", "s27")}
        </div>
        <div class="tb last wide low">
          ${b("link", "Environment", "s33 tight")}${b("restartenv", "Step context", "s27")}${caret()}${b("up", "Up")}${b("left", "Back", "s27")}${b("right", "Forward", "s27")}${sep}
          ${b("restart", "Restart")}
          <input class="field white f5" aria-label="Run length" .value=${"100 ns"} />
          <span class="spin"><button aria-label="Increase"><i class="tri up"></i></button><button aria-label="Decrease"><i class="tri down"></i></button></span>
          ${b("run", "Run", "s27")}${b("runc", "Continue run")}${b("runall", "Run all", "s27")}${b("break", "Break", "s27")}${b("stop", "Stop", "s27")}${sep}
          ${b("perf", "Performance profiling", "s33 gap")}${b("mem", "Memory profiling", "s33 tight")}${b("hand", "Edit breakpoints", "s27")}
        </div>
      </div>
      <div class="bar r2">
        <div class="tb wide">
          ${b("stepin", "Step into", "s27")}${b("stepover", "Step over", "s27")}${b("stepout", "Step out", "s27")}${sep}
          ${b("stepin2", "Step into instance", "s27")}${caret()}${b("stepover2", "Step over instance", "s27")}${caret()}${b("stepout2", "Step out instance")}
        </div>
        <div class="tb push last wide">
          <label for="layout">Layout</label><select id="layout" class="field f2"><option>Simulate</option></select>
          <button class="drop" aria-label="Open layouts"></button>
        </div>
      </div>
      <div class="bar r3">
        <div class="tb">
          <label for="cols">ColumnLayout</label><select id="cols" class="field f1"><option>AllColumns</option></select>
          <button class="drop" aria-label="Open column layouts"></button>
        </div>
        <div class="tb">
          ${b("flagadd", "Add bookmark", "s27")}${caret()}${b("flagdel", "Delete bookmark")}${caret()}${b("flagedit", "Manage bookmarks")}${b("flagsave", "Save bookmarks", "s27")}${caret()}${b("flaggo", "Go to bookmark")}
        </div>
        <div class="tb wide low">
          ${b("pointer", "Select mode", "s33 on")}${b("zoommode", "Zoom mode", "s33")}${b("pan", "Pan mode", "s33")}${b("twocur", "Two cursor mode", "s33")}${b("edges", "Edit mode", "s33 tight")}${sep}
          ${b("traffic", "Stop drawing")}
        </div>
        <div class="tb snug">
          ${b("curadd", "Insert cursor")}${b("curdel", "Delete cursor")}${b("t1", "Previous transition")}${b("t2", "Next transition")}${b("t3", "Previous falling edge")}${b("t4", "Next falling edge")}${b("t5", "Previous rising edge")}${b("t6", "Next rising edge")}
        </div>
        <div class="tb wide">
          ${b("fanin", "Expand to drivers")}${caret()}${b("fanout", "Expand to readers")}${caret()}${b("netexp", "Expand net")}${sep}
          <label class="off" for="search">Search:</label><input id="search" class="field f3" /><button class="drop off" aria-label="Search history"></button>
          ${b("findprev", "Find previous", "s25")}${b("findnext", "Find next", "s31")}${b("findopt", "Search options")}
        </div>
        <div class="tb push last wide">
          ${b("zin", "Zoom in")}${b("zout", "Zoom out", "s27")}${b("zfull", "Zoom full", "s27")}${b("zcur", "Zoom in on cursor")}${b("zcur2", "Zoom between cursors", "s27")}${b("zarea", "Zoom other")}
        </div>
      </div>
      <div class="bar">
        <div class="tb wide low">
          ${b("w1", "Compare all", "s33 on")}${b("w2", "Compare region", "s33")}${b("w3", "Compare full", "s33 tight")}${sep}
          ${b("w4", "Event mode", "s27")}${b("w5", "Delta mode", "s27")}${b("w6", "Time mode")}${b("w7", "Cursor mode")}
        </div>
      </div>
    </div>`;
  }

  private structure() {
    return html`<section class="left">
      <div class="pane">
        ${paneHead("sim", "sim - Default", true)}
        <div class="tree">
          <table>
            <thead><tr>
              <th class="c1"><i class="sort"></i>Instance</th><th class="c2">Design unit</th><th class="c3">Design unit type</th><th class="c4">Top Category</th><th>Visibility</th>
            </tr></thead>
            <tbody>
              <tr class="spacer"><td colspan="5"></td></tr>
              ${ROWS.map((r) => html`<tr class=${classMap({ sel: !!r.selected })}>
                <td><span class="node"><svg width=${r.deep ? 72 : 51} height="20" aria-hidden="true">${r.art}</svg>${r.name}</span></td>
                <td></td><td></td><td>${r.cat}</td><td>+acc</td>
              </tr>`)}
            </tbody>
          </table>
        </div>
        <div class="hbar">${arrow("left")}<span class="track"><span class="thumb"></span><span class="rest"></span></span>${arrow("right")}</div>
      </div>
      <div class="tabs">
        <button class="tab">${icon("project")}Project${icon("dismiss", 12, 12)}</button>
        <button class="tab cur">${icon("sim")}sim${icon("dismiss", 12, 12)}</button>
        <span class="fill"></span>
        <span class="nav"><button aria-label="Previous tab">«</button><button aria-label="Next tab">»</button></span>
      </div>
    </section>`;
  }

  private wavePane() {
    return html`<section class="pane">
      ${paneHead("wavewin", "Wave - Default")}
      <div class="wave">
        <div class="g sh"><button aria-label="Signal format">${icon("shapes")}</button>${caret()}</div>
        <div class="g msgs">Msgs</div><div class="black"></div><div class="g"></div>
        <div class="g edgew"></div><div class="g"></div><div class="black grid"></div>
        <div class="vbar">${arrow("up")}<span class="thumb"></span>${arrow("down")}</div>
        <div class="g">
          <div class="nowrow"><span class="tray">${icon("freq", 15)}${icon("note", 15)}${icon("plus", 15)}</span><span class="val">Now</span></div>
          <div class="currow"><span class="tray low">${icon("lock", 16)}${icon("wrench", 16)}${icon("minus", 14)}</span><span class="val">Cursor 1</span></div>
        </div>
        <div class="g"><div class="nowrow"><span class="val">0 ns</span></div><div class="currow"><span class="val">0 ns</span></div></div>
        <div class="black"><div class="ticks"></div><div class="marks"><span>ns</span>${RULER.map((t) => html`<span>${t}</span>`)}</div><div class="stamp">0 ns</div></div>
        <div class="g"></div>
        <div class="sbar edgeg">${arrow("left", true)}<span class="track"></span>${arrow("right", true)}</div>
        <div class="sbar">${arrow("left")}<span class="track"></span>${arrow("right")}</div>
        <div class="sbar">${arrow("left")}<span class="thumb"></span>${arrow("right")}</div>
        <div class="g"></div>
      </div>
    </section>`;
  }

  private contextMenu() {
    return html`<div class="ctx" role="menu">
      ${CONTEXT.map((i) => i === null ? html`<hr />` : html`
        <button role="menuitem" class=${classMap({ hot: !!i.hot, off: !!i.off })}>
          <span>${i.label}</span><span>${i.key ?? ""}</span>${i.sub ? html`<i class="tri right"></i>` : nothing}
        </button>`)}
    </div>`;
  }

  render() {
    return html`
      <svg class="defs" aria-hidden="true"><defs>
        <pattern id="checker" width="2" height="2" patternUnits="userSpaceOnUse"><path d="M0 0h1v1H0zM1 1h1v1H1z" fill="#fff"/></pattern>
        <mask id="dither" maskUnits="userSpaceOnUse" x="0" y="0" width="24" height="24"><rect width="24" height="24" fill="url(#checker)"/></mask>
      </defs></svg>
      <div class="title">
        ${icon("app")}<h1>ModelSim SE-64 10.6d</h1>
        <button aria-label="Minimize"><svg width="12" height="12"><path d="M0 5.500h12" stroke="#000"/></svg></button>
        <button aria-label="Restore"><svg width="12" height="12"><path d="M.5 3.500h8v8h-8zM3 3V.5h8.500V9H9" fill="none" stroke="#000"/></svg></button>
        <button aria-label="Close"><svg width="12" height="12"><path d="M0 0l12 12M12 0L0 12" stroke="#000"/></svg></button>
      </div>
      <span class="edge"></span>
      <nav class="menus">${MENUS.map((m) => html`<button>${m}</button>`)}</nav>
      ${this.toolbars()}
      <main class="work">${this.structure()}${this.wavePane()}</main>
      <section class="log">
        ${paneHead("transcript", "Transcript")}
        <div class="logbody"><div class="text">VSIM 2&gt;</div><div class="vbar">${arrow("up")}${arrow("down")}</div></div>
      </section>
      <footer class="status"><span></span><span>Project : project1</span><span>Now: 0 ns   Delta: 0</span><span>sim:/tb_23</span><i></i></footer>
      <div class="foot"></div>
      ${this.contextMenu()}
      <svg class="pointer" width="280" height="50" aria-hidden="true"><path d="M270 43L25 12l3-6L7 13l19 12-1-7 245 25" fill="none" stroke="#f00" stroke-width="2"/></svg>
      <p class="note">右键找到<span>add wave</span><br />添加输入和输出</p>`;
  }
}
